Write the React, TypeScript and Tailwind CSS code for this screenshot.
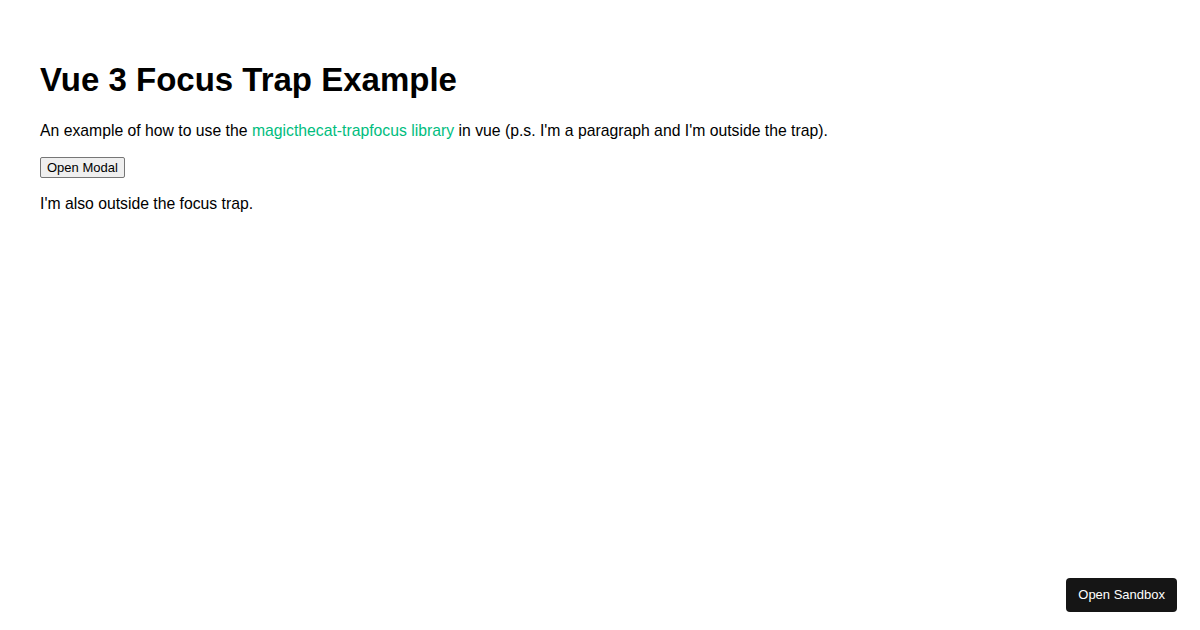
export default function App() {
  return (
    <div className="min-h-screen bg-white px-10 pt-[61px] font-['Liberation_Sans',Arial,sans-serif] text-black">
      <h1 className="text-[33px] font-bold leading-[37px]">Vue 3 Focus Trap Example</h1>
      <p className="mt-[23px] text-[15.75px] leading-[19px]">
        An example of how to use the{" "}
        <a href="#" className="text-[#00bd7e]">
          magicthecat-trapfocus library
        </a>{" "}
        in vue (p.s. I'm a paragraph and I'm outside the trap).
      </p>
      <div className="mt-[17px] flex">
        <button className="h-[21px] rounded-[2px] border border-[#767676] bg-[#efefef] px-[6px] text-[13px] leading-[15px]">
          Open Modal
        </button>
      </div>
      <p className="mt-[16px] text-[15.75px] leading-[19px]">I'm also outside the focus trap.</p>

      <button className="fixed right-[23px] bottom-[18px] h-[34px] rounded-[4px] bg-[#151515] px-[12px] text-[13px] text-white">
        Open Sandbox
      </button>
    </div>
  );
}
